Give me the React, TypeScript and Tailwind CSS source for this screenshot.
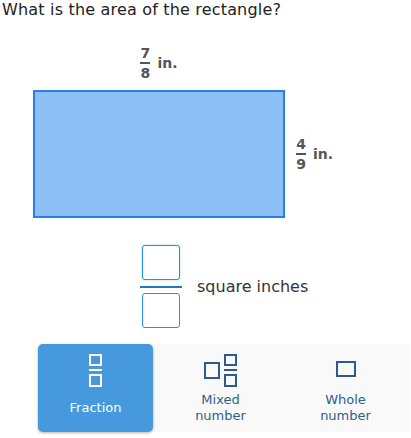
import React from 'react';

const font = { fontFamily: '"DejaVu Sans", Verdana, sans-serif' };

const Frac: React.FC<{ num: string; den: string }> = ({ num, den }) => (
  <span className="inline-flex flex-col items-center text-[14px] font-bold leading-[14px] text-[#555]">
    <span>{num}</span>
    <span className="my-[2px] h-[2px] w-[10px] bg-[#555]"></span>
    <span>{den}</span>
  </span>
);

const Dim: React.FC<{ num: string; den: string }> = ({ num, den }) => (
  <div className="flex items-center gap-[7px]">
    <Frac num={num} den={den} />
    <span className="text-[14px] font-bold text-[#555]">in.</span>
  </div>
);

const Tab: React.FC<{ active?: boolean; icon: React.ReactNode; label: React.ReactNode }> = ({
  active,
  icon,
  label,
}) => (
  <button
    className={`flex h-[88px] w-[115px] flex-col items-center rounded-[5px] pt-[10px] text-[13px] leading-[16px] ${
      active ? 'bg-[#4699dd] text-white shadow-[0_1px_3px_rgba(0,0,0,0.3)]' : 'text-[#2f5f8f]'
    }`}
  >
    <div className="flex h-[33px] items-center">{icon}</div>
    <div className="mt-[5px] flex h-[32px] items-center text-center">{label}</div>
  </button>
);

const FracIcon: React.FC<{ color: string }> = ({ color }) => (
  <svg width="14" height="33" viewBox="0 0 14 33">
    <rect x="1" y="1" width="11" height="10" fill="none" stroke={color} strokeWidth="2" />
    <rect x="0" y="15" width="13" height="2" fill={color} />
    <rect x="1" y="21" width="11" height="11" fill="none" stroke={color} strokeWidth="2" />
  </svg>
);

export default function App() {
  return (
    <div className="h-[438px] w-[411px] bg-white" style={font}>
      <h1 className="pl-[2px] text-[16px] leading-[19px] tracking-[0.18px] text-[#222]">
        What is the area of the rectangle?
      </h1>

      <div className="ml-[33px] mt-[27px] flex w-[252px] justify-center">
        <Dim num="7" den="8" />
      </div>

      <div className="ml-[33px] mt-[10px] flex items-center gap-[11px]">
        <div className="h-[128px] w-[252px] border-2 border-[#2b7de9] bg-[#8ec0f8]"></div>
        <Dim num="4" den="9" />
      </div>

      <div className="ml-[140px] mt-[27px] flex items-center gap-[15px]">
        <div className="flex w-[42px] flex-col items-center">
          <div className="h-[35px] w-[38px] rounded-[3px] border border-[#1f94e4] bg-white shadow-[0_0_2px_rgba(31,148,228,0.5)]"></div>
          <div className="mb-[5px] mt-[6px] h-[2px] w-[42px] bg-[#1a7bc2]"></div>
          <div className="h-[35px] w-[38px] rounded-[3px] border border-[#1f94e4] bg-white"></div>
        </div>
        <span className="text-[16px] text-[#333]">square inches</span>
      </div>

      <div className="ml-[38px] mt-[16px] flex w-[371px] gap-[10px] rounded-[5px] bg-[#f9f9f9]">
        <Tab active icon={<FracIcon color="#ffffff" />} label="Fraction" />
        <Tab
          icon={
            <div className="flex items-center gap-[4px]">
              <svg width="16" height="17" viewBox="0 0 16 17">
                <rect x="1" y="1" width="14" height="15" fill="none" stroke="#2d5a8e" strokeWidth="2" />
              </svg>
              <FracIcon color="#2d5a8e" />
            </div>
          }
          label={
            <span>
              Mixed
              <br />
              number
            </span>
          }
        />
        <Tab
          icon={
            <svg width="20" height="16" viewBox="0 0 20 16" className="-mt-[3px]">
              <rect x="1" y="1" width="18" height="14" fill="none" stroke="#2d5a8e" strokeWidth="2" />
            </svg>
          }
          label={
            <span>
              Whole
              <br />
              number
            </span>
          }
        />
      </div>
    </div>
  );
}
